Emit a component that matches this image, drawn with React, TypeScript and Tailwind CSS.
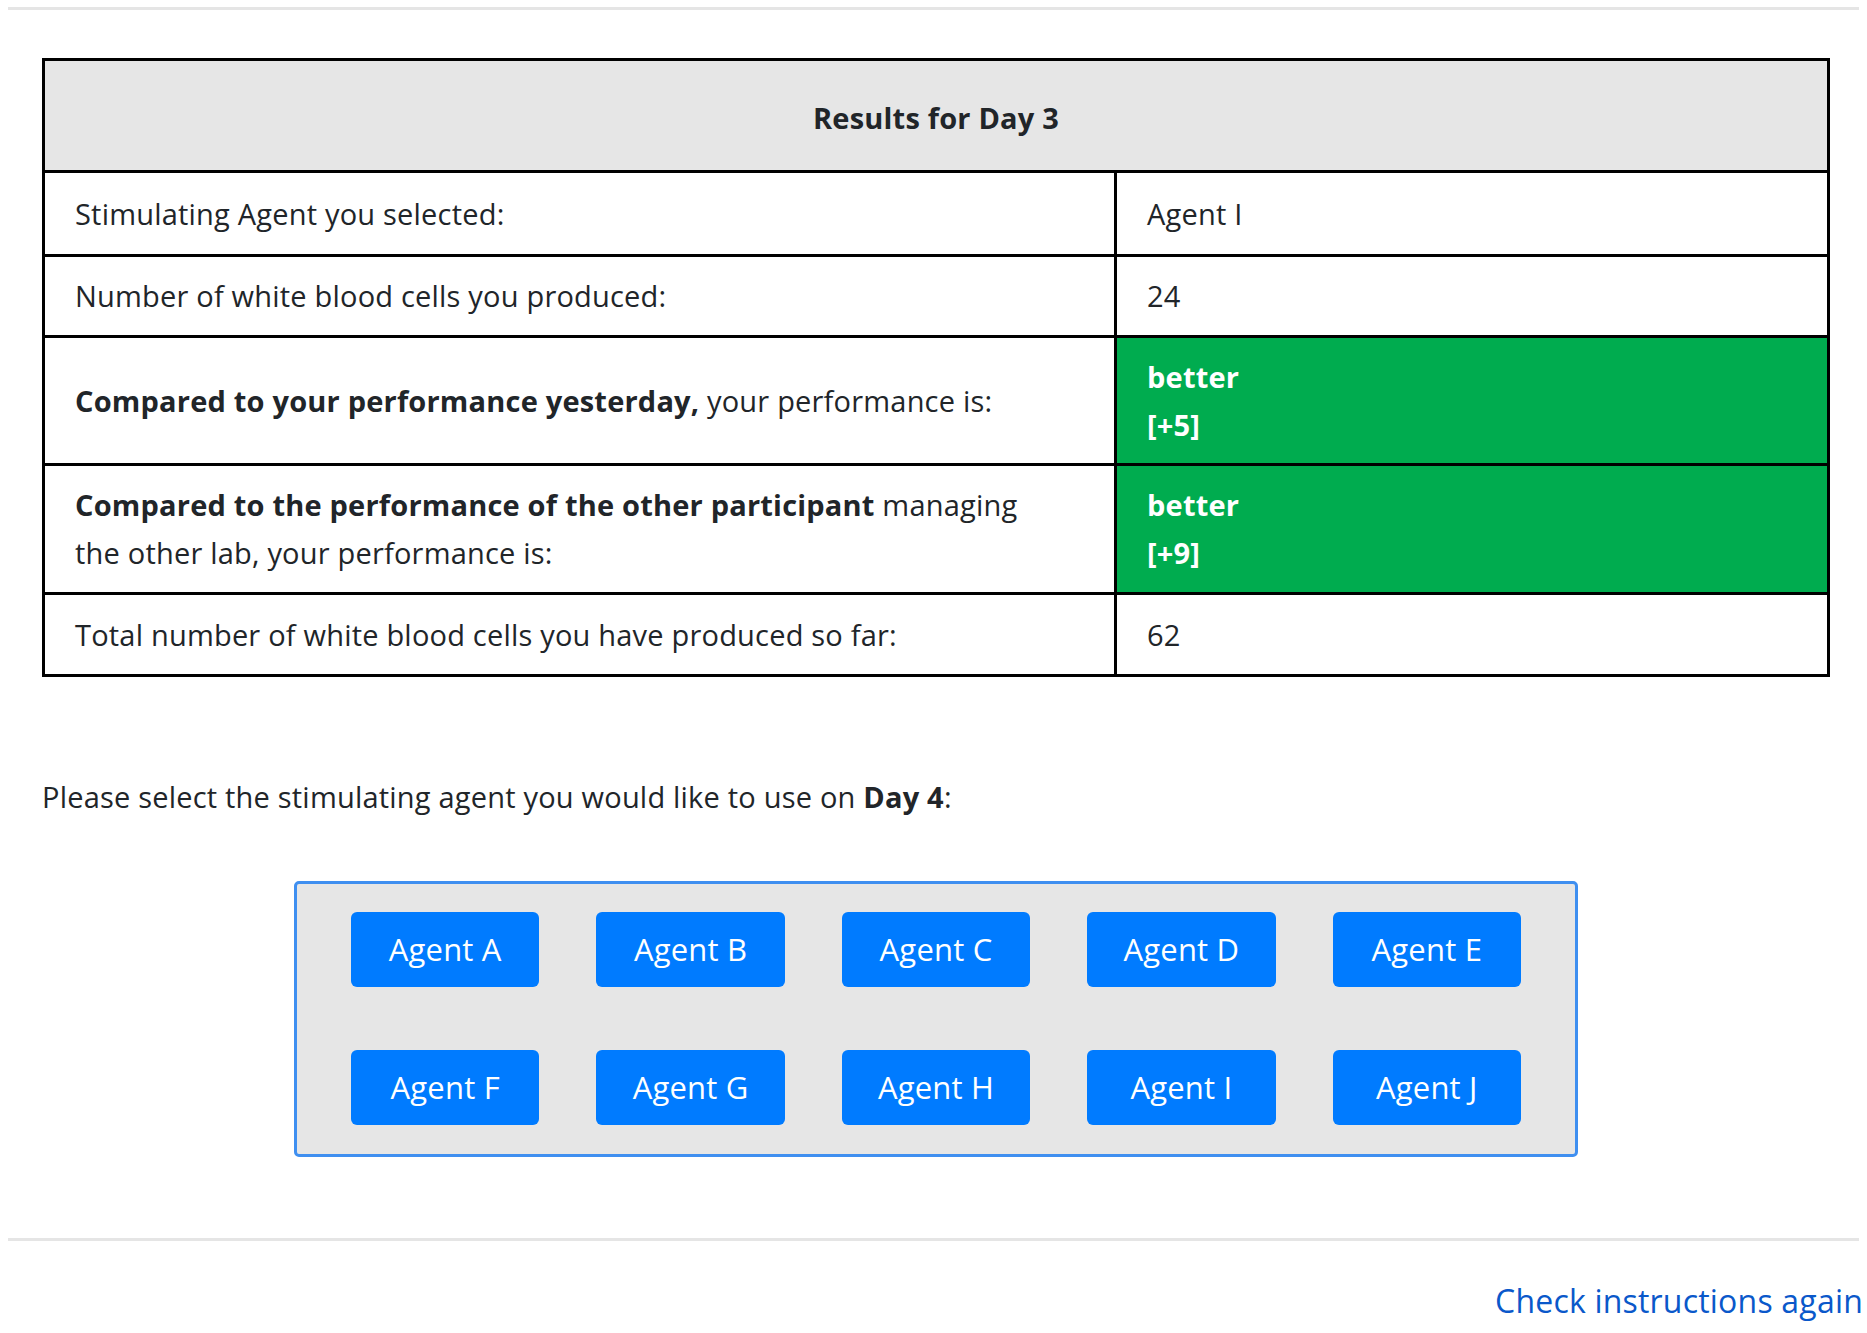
import React from "react";

const font = { fontFamily: '"Open Sans", "Noto Sans", sans-serif' };

export default function App() {
  const agents = ["A", "B", "C", "D", "E", "F", "G", "H", "I", "J"];
  return (
    <div className="w-[1867px] h-[1333px] bg-white text-[#212529] text-[29px] tracking-[0.2px]" style={font}>
      <div className="pt-[7px] px-[8px]">
        <div className="h-[3px] bg-[#e5e5e5]" />
      </div>
      <div className="pl-[42px] pr-[37px] pt-[48px]">
        <table className="w-full border-collapse border-[3px] border-black">
          <thead>
            <tr className="h-[112px] bg-[#e6e6e6]">
              <th colSpan={2} className="border-[3px] border-black font-bold text-center pt-[4px]">Results for Day 3</th>
            </tr>
          </thead>
          <tbody>
            <tr className="h-[84px]">
              <td className="w-[1072px] border-[3px] border-black px-[30px]">Stimulating Agent you selected:</td>
              <td className="border-[3px] border-black px-[30px]">Agent I</td>
            </tr>
            <tr className="h-[81px]">
              <td className="border-[3px] border-black px-[30px]">Number of white blood cells you produced:</td>
              <td className="border-[3px] border-black px-[30px]">24</td>
            </tr>
            <tr className="h-[128px]">
              <td className="border-[3px] border-black px-[30px]"><b>Compared to your performance yesterday,</b> your performance is:</td>
              <td className="border-[3px] border-black px-[30px] bg-[#00ac4f] text-white font-bold leading-[48px]">better<br />[+5]</td>
            </tr>
            <tr className="h-[129px]">
              <td className="border-[3px] border-black px-[30px] leading-[48px]"><b>Compared to the performance of the other participant</b> managing<br />the other lab, your performance is:</td>
              <td className="border-[3px] border-black px-[30px] bg-[#00ac4f] text-white font-bold leading-[48px]">better<br />[+9]</td>
            </tr>
            <tr className="h-[82px]">
              <td className="border-[3px] border-black px-[30px]">Total number of white blood cells you have produced so far:</td>
              <td className="border-[3px] border-black px-[30px]">62</td>
            </tr>
          </tbody>
        </table>
        <p className="mt-[98px]">Please select the stimulating agent you would like to use on <b>Day 4</b>:</p>
        <div className="ml-[252px] mt-[62px] w-[1284px] h-[276px] border-[3px] border-[#3f8ff0] rounded-[5px] bg-[#e6e6e6] grid grid-cols-5 gap-x-[57px] gap-y-[63px] content-start pl-[54px] pr-[54px] pt-[28px]">
          {agents.map((a) => (
            <button key={a} className="h-[75px] bg-[#007bff] text-white rounded-[6px] text-[31px]">Agent {a}</button>
          ))}
        </div>
      </div>
      <div className="mt-[81px] px-[8px]">
        <div className="h-[3px] bg-[#e5e5e5]" />
      </div>
      <div className="flex justify-end pr-[4px] mt-[36px]">
        <a className="text-[#0a58ca] text-[32px]">Check instructions again</a>
      </div>
    </div>
  );
}
